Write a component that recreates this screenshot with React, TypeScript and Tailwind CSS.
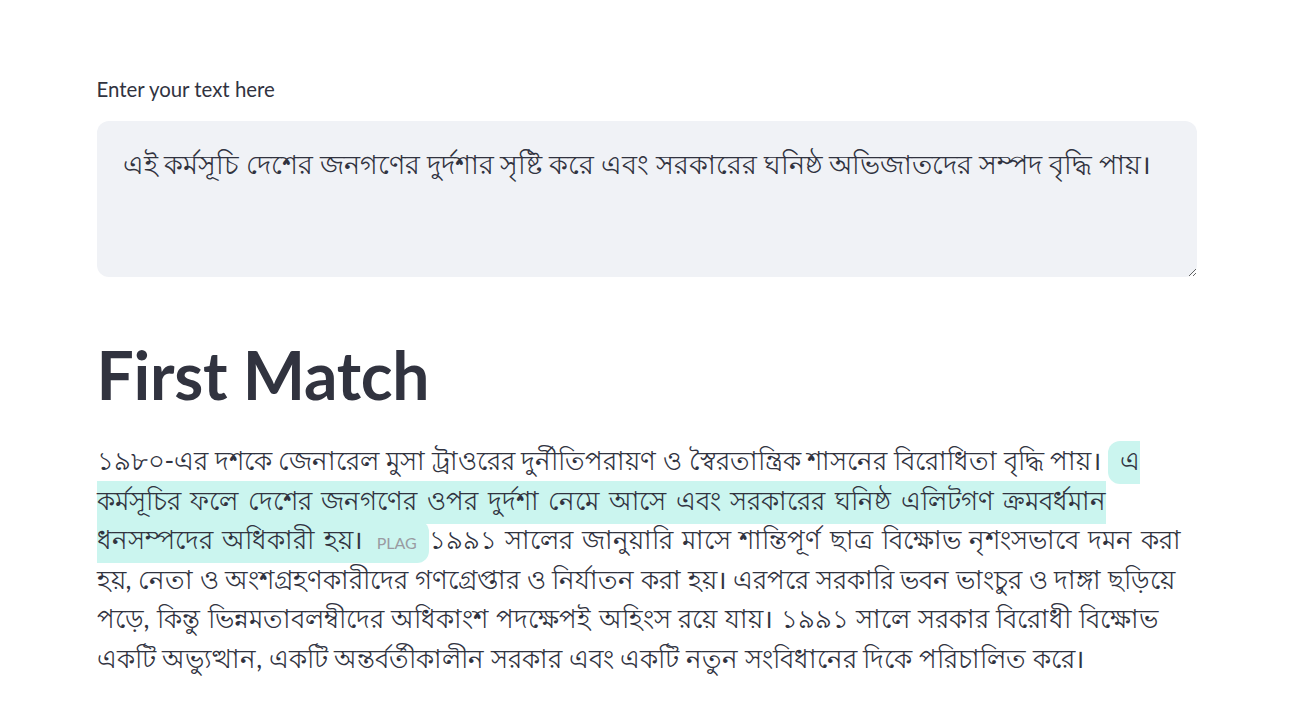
import React from "react";

const latin = { fontFamily: '"Source Sans Pro", Lato, "Noto Sans", sans-serif' };

export default function App() {
  return (
    <div className="min-h-screen bg-white text-[#31333f]" style={latin}>
      <div className="mx-auto w-[1100px] pt-[77px]">
        <div className="text-[20.4px] leading-[24px] mb-[20px]">Enter your text here</div>
        <textarea
          readOnly
          className="block w-full h-[156px] rounded-[12px] bg-[#f0f2f6] px-[26px] pt-[24px] text-[26.5px] leading-[38px] text-[#31333f] outline-none resize-y"
          defaultValue="এই কর্মসূচি দেশের জনগণের দুর্দশার সৃষ্টি করে এবং সরকারের ঘনিষ্ঠ অভিজাতদের সম্পদ বৃদ্ধি পায়।"
        />
        <h1 className="mt-[58px] text-[66px] leading-[79px] font-bold tracking-[-0.3px]">First Match</h1>
        <p className="mt-[27px] text-[26px] leading-[39.6px]">
          ১৯৮০-এর দশকে জেনারেল মুসা ট্রাওরের দুর্নীতিপরায়ণ ও স্বৈরতান্ত্রিক শাসনের বিরোধিতা বৃদ্ধি পায়।{" "}
          <span className="bg-[#cbf5ef] rounded-[12px] px-[12px] pt-[3px] pb-[8px] leading-none">
            এ{" "}
            <span className="[word-spacing:3px]">
              কর্মসূচির ফলে দেশের জনগণের ওপর দুর্দশা নেমে আসে এবং সরকারের ঘনিষ্ঠ এলিটগণ ক্রমবর্ধমান
              <br />
              ধনসম্পদের অধিকারী হয়।
            </span>
            <span className="text-[16px] text-[#9a9ba2] pl-[14px]">PLAG</span>
          </span>
          <span className="[word-spacing:2px]">
            ১৯৯১ সালের জানুয়ারি মাসে শান্তিপূর্ণ ছাত্র বিক্ষোভ নৃশংসভাবে দমন করা
          </span>
          <br />
          হয়, নেতা ও অংশগ্রহণকারীদের গণগ্রেপ্তার ও নির্যাতন করা হয়। এরপরে সরকারি ভবন ভাংচুর ও দাঙ্গা ছড়িয়ে
          <br />
          <span className="[word-spacing:1px]">
            পড়ে, কিন্তু ভিন্নমতাবলম্বীদের অধিকাংশ পদক্ষেপই অহিংস রয়ে যায়। ১৯৯১ সালে সরকার বিরোধী বিক্ষোভ
          </span>
          <br />
          একটি অভ্যুত্থান, একটি অন্তর্বর্তীকালীন সরকার এবং একটি নতুন সংবিধানের দিকে পরিচালিত করে।
        </p>
      </div>
    </div>
  );
}
